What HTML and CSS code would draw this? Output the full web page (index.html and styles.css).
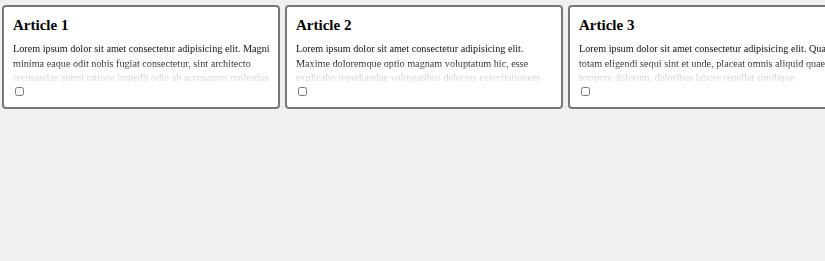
FILE: index.html
```html
<!DOCTYPE html>
<html>
<head>
<meta charset="utf-8">
<link rel="stylesheet" href="styles.css">
</head>
<body>
<div class="row">
  <article class="card">
    <h2 class="title">Article 1</h2>
    <p class="text">Lorem ipsum dolor sit amet consectetur adipisicing elit. Magni minima eaque odit nobis fugiat consectetur, sint architecto recusandae animi ratione impedit odio ab accusamus molestias</p>
    <input type="checkbox" class="check">
  </article>
  <article class="card">
    <h2 class="title">Article 2</h2>
    <p class="text">Lorem ipsum dolor sit amet consectetur adipisicing elit. Maxime doloremque optio magnam voluptatum hic, esse explicabo repudiandae voluptatibus delectus exercitationem</p>
    <input type="checkbox" class="check">
  </article>
  <article class="card">
    <h2 class="title">Article 3</h2>
    <p class="text">Lorem ipsum dolor sit amet consectetur adipisicing elit. Quas totam eligendi sequi sint et unde, placeat omnis aliquid quae tempore dolorum, doloribus labore repellat similique</p>
    <input type="checkbox" class="check">
  </article>
</div>
</body>
</html>
```
FILE: styles.css
```css
html, body {
  margin: 0;
  padding: 0;
  background: #f0f0f0;
  height: 100%;
  overflow: hidden;
}
.row {
  display: flex;
  gap: 5px;
  padding: 5px 2px;
  overflow: hidden;
}
.card {
  flex: 0 0 278px;
  box-sizing: border-box;
  background: #fff;
  border: 2px solid #777;
  border-radius: 4px;
  padding: 10px 5px 11px 9px;
  display: flex;
  flex-direction: column;
  align-items: flex-start;
}
.title {
  margin: 0 0 8px 0;
  font-family: "Liberation Serif", "Times New Roman", serif;
  font-size: 15px;
  font-weight: bold;
  line-height: 17px;
  color: #000;
}
.text {
  margin: 0;
  font-family: "Liberation Serif", "Times New Roman", serif;
  font-size: 10.2px;
  line-height: 14.5px;
  color: #111;
  height: 43px;
  overflow: hidden;
  -webkit-mask-image: linear-gradient(to bottom, #000 0%, #000 45%, rgba(0,0,0,0.2) 80%, rgba(0,0,0,0.05) 100%);
  mask-image: linear-gradient(to bottom, #000 0%, #000 45%, rgba(0,0,0,0.2) 80%, rgba(0,0,0,0.05) 100%);
}
.check {
  width: 9px;
  height: 9px;
  margin: 2px 0 0 2px;
}
```
